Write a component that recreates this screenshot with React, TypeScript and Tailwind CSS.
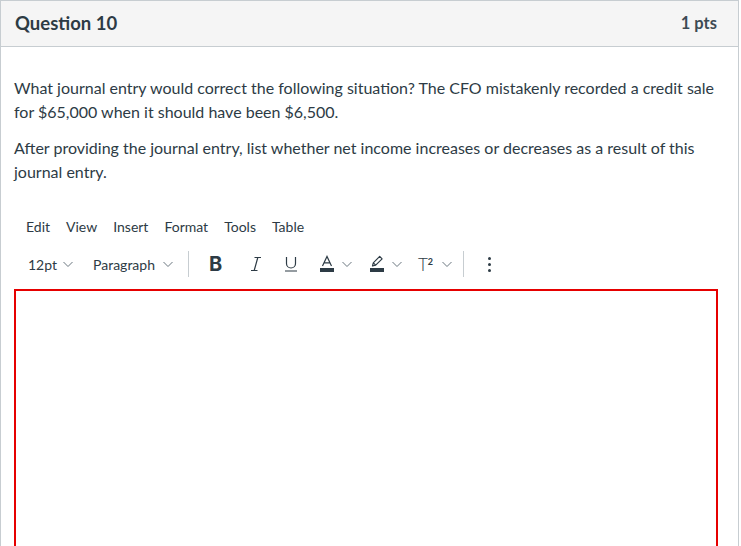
const FONT = { fontFamily: 'Lato, "Open Sans", sans-serif' };

function Caret({ className = '' }: { className?: string }) {
  return (
    <svg className={className} width="12" height="8" viewBox="0 0 12 8" fill="none" stroke="#6b7780" strokeWidth="1">
      <path d="M1.5 2l4.5 4.5L10.5 2" />
    </svg>
  );
}

function Divider({ className = '' }: { className?: string }) {
  return <div className={`w-px h-[26px] bg-[#c7cdd1] ${className}`} />;
}

export default function App() {
  return (
    <div className="bg-white w-[741px] h-[546px] overflow-hidden text-[#2d3b45]" style={FONT}>
      <div className="w-[739px] border border-[#c7cdd1] border-b-0 h-[560px]">
        {/* Header */}
        <div className="h-[46px] bg-[#f5f5f5] border-b border-[#c7cdd1] flex items-center justify-between pl-[14px] pr-[21px]">
          <h2 className="text-[18.5px] font-bold">Question 10</h2>
          <span className="text-[16.5px] font-bold text-[#3d4a53]">1 pts</span>
        </div>

        {/* Body */}
        <div className="px-[13px] pt-[29px]">
          <p className="text-[16px] leading-[24px]">
            What journal entry would correct the following situation? The CFO mistakenly recorded a credit sale for $65,000 when it should have been $6,500.
          </p>
          <p className="text-[16px] leading-[24px] mt-[12px]">
            After providing the journal entry, list whether net income increases or decreases as a result of this journal entry.
          </p>

          {/* Menu bar */}
          <div className="flex items-center gap-[16px] text-[14px] pl-[12px] mt-[30px] h-[24px]">
            <span>Edit</span>
            <span>View</span>
            <span>Insert</span>
            <span>Format</span>
            <span>Tools</span>
            <span>Table</span>
          </div>

          {/* Toolbar */}
          <div className="flex items-center h-[38px] mt-[7px] pl-[14px] text-[14px]">
            <span>12pt</span>
            <Caret className="ml-[5px]" />
            <span className="ml-[19px]">Paragraph</span>
            <Caret className="ml-[7px]" />
            <Divider className="ml-[14px]" />
            <span className="ml-[20px] w-[14px] text-[20px] font-bold leading-none" style={{ fontFamily: 'Inter, sans-serif' }}>B</span>
            <svg className="ml-[26px]" width="14" height="16" viewBox="0 0 14 16" fill="none" stroke="#2d3b45" strokeWidth="1.2">
              <path d="M5.5 1.5h6.5M2 14.5h6.5M8.8 1.5l-3.6 13" />
            </svg>
            <svg className="ml-[21px]" width="14" height="16" viewBox="0 0 14 16" fill="none" stroke="#2d3b45" strokeWidth="1.2">
              <path d="M2.5 1v6.5a4.5 4.5 0 0 0 9 0V1M1 15h12" />
            </svg>
            <svg className="ml-[21px]" width="16" height="18" viewBox="0 0 16 18" fill="none">
              <path d="M3.5 11L8 1.5 12.5 11M5.2 7.8h5.6" stroke="#2d3b45" strokeWidth="1.2" />
              <rect x="1" y="13" width="14" height="4" fill="#2d3b45" />
            </svg>
            <Caret className="ml-[6px]" />
            <svg className="ml-[16px]" width="16" height="18" viewBox="0 0 16 18" fill="none">
              <path d="M3.5 11l.8-3.2 6.4-6.4 2.4 2.4-6.4 6.4-3.2.8zM4.3 7.8l2.4 2.4" stroke="#2d3b45" strokeWidth="1.2" strokeLinejoin="round" />
              <rect x="1" y="13" width="14" height="4" fill="#2d3b45" />
            </svg>
            <Caret className="ml-[6px]" />
            <span className="ml-[15px] w-[16px] text-[17px] leading-none font-light">
              T<sup className="text-[9px] font-bold -top-[0.6em]">2</sup>
            </span>
            <Caret className="ml-[7px]" />
            <Divider className="ml-[10px]" />
            <div className="ml-[24px] flex flex-col gap-[3px]">
              <span className="w-[3px] h-[3px] rounded-full bg-[#2d3b45]" />
              <span className="w-[3px] h-[3px] rounded-full bg-[#2d3b45]" />
              <span className="w-[3px] h-[3px] rounded-full bg-[#2d3b45]" />
            </div>
          </div>

          {/* Editor area */}
          <div className="mt-[6px] w-[704px] h-[300px] border-2 border-[#e60000] border-b-0" />
        </div>
      </div>
    </div>
  );
}
